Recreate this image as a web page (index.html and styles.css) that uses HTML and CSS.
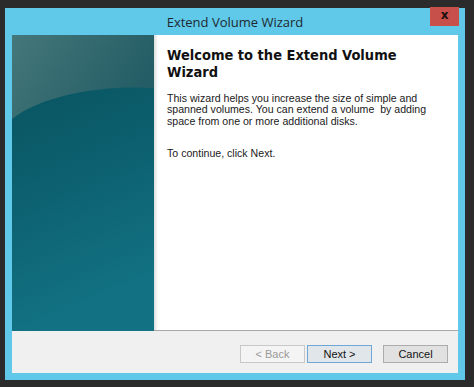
FILE: index.html
```html
<!DOCTYPE html>
<html lang="en">
<head>
  <meta charset="UTF-8">
  <title>Extend Volume Wizard</title>
  <link rel="stylesheet" href="styles.css">
</head>
<body>
  <div class="window">
    <div class="titlebar">
      <span class="title">Extend Volume Wizard</span>
      <div class="close">x</div>
    </div>
    <div class="client">
      <div class="main">
        <div class="side">
          <svg viewBox="0 0 142 296" preserveAspectRatio="none" width="142" height="296">
            <defs>
              <linearGradient id="deep" x1="0" y1="0" x2="0.2" y2="1">
                <stop offset="0" stop-color="#084f5b"/>
                <stop offset="0.5" stop-color="#0c5f6e"/>
                <stop offset="1" stop-color="#127283"/>
              </linearGradient>
              <linearGradient id="cap" x1="0" y1="0" x2="1" y2="0.4">
                <stop offset="0" stop-color="#44777a"/>
                <stop offset="1" stop-color="#245d65"/>
              </linearGradient>
            </defs>
            <rect x="0" y="0" width="142" height="296" fill="url(#deep)"/>
            <path d="M0 0 H142 V53 C90 50 30 60 0 84 Z" fill="url(#cap)"/>
          </svg>
        </div>
        <div class="content">
          <h1>Welcome to the Extend Volume<br>Wizard</h1>
          <p>This wizard helps you increase the size of simple and<br>spanned volumes. You can extend a volume&nbsp; by adding<br>space from one or more additional disks.</p>
          <p class="next-hint">To continue, click Next.</p>
        </div>
      </div>
      <div class="footer">
        <button class="btn" disabled>&lt; Back</button>
        <button class="btn default">Next &gt;</button>
        <button class="btn cancel">Cancel</button>
      </div>
    </div>
  </div>
</body>
</html>
```

FILE: styles.css
```css
body {
  margin: 0;
  padding: 8px 9px 7px 5px;
  background-color: #2b2b2b;
  font-family: "Liberation Sans", Arial, sans-serif;
}
.window {
  width: 460px;
  height: 372px;
  background-color: #60c8e9;
  display: flex;
  flex-direction: column;
  padding: 0 7px 7px 7px;
  box-sizing: border-box;
  position: relative;
}
.titlebar {
  height: 27px;
  display: flex;
  align-items: center;
  justify-content: center;
}
.title {
  font-family: "Open Sans", "Noto Sans", sans-serif;
  font-size: 13px;
  color: #1d2a30;
  padding-top: 1px;
}
.close {
  position: absolute;
  top: -1px;
  right: 6px;
  width: 29px;
  height: 19px;
  background-color: #c7504a;
  color: #1a0f0f;
  font-family: "DejaVu Sans", sans-serif;
  font-weight: bold;
  font-size: 12px;
  line-height: 17px;
  text-align: center;
}
.client {
  flex: 1;
  display: flex;
  flex-direction: column;
  background-color: #f0f0f0;
}
.main {
  height: 296px;
  display: flex;
  background-color: #fff;
  border-bottom: 1px solid #a8a8a8;
  box-sizing: border-box;
}
.side {
  width: 142px;
  height: 296px;
  flex-shrink: 0;
  overflow: hidden;
}
.side svg {
  display: block;
}
.content {
  flex: 1;
  min-width: 0;
  padding: 12px 10px 0 13px;
  background: linear-gradient(to right, #dcdcdc, #fff 4px);
}
h1 {
  font-family: "DejaVu Sans Condensed", "Liberation Sans", sans-serif;
  font-stretch: condensed;
  font-weight: bold;
  font-size: 14.5px;
  line-height: 16.5px;
  color: #111;
  margin: 0 0 13px 0;
  white-space: nowrap;
}
p {
  font-size: 10.6px;
  line-height: 11.3px;
  color: #1a1a1a;
  margin: 0;
  white-space: nowrap;
}
.next-hint {
  margin-top: 21px;
}
.footer {
  flex: 1;
  display: flex;
  justify-content: flex-end;
  align-items: flex-start;
  padding: 14px 10px 0 0;
}
.btn {
  width: 65px;
  height: 18px;
  font-family: "Liberation Sans", Arial, sans-serif;
  font-size: 11px;
  padding: 0;
  border: 1px solid #acacac;
  background-color: #e1e1e1;
  color: #111;
}
.btn[disabled] {
  border-color: #c8c8c8;
  background-color: #f4f4f4;
  color: #9a9a9a;
  margin-right: 2px;
}
.btn.default {
  border-color: #6ea6d8;
  background-color: #e1e6ea;
}
.btn.cancel {
  margin-left: 11px;
}
```
